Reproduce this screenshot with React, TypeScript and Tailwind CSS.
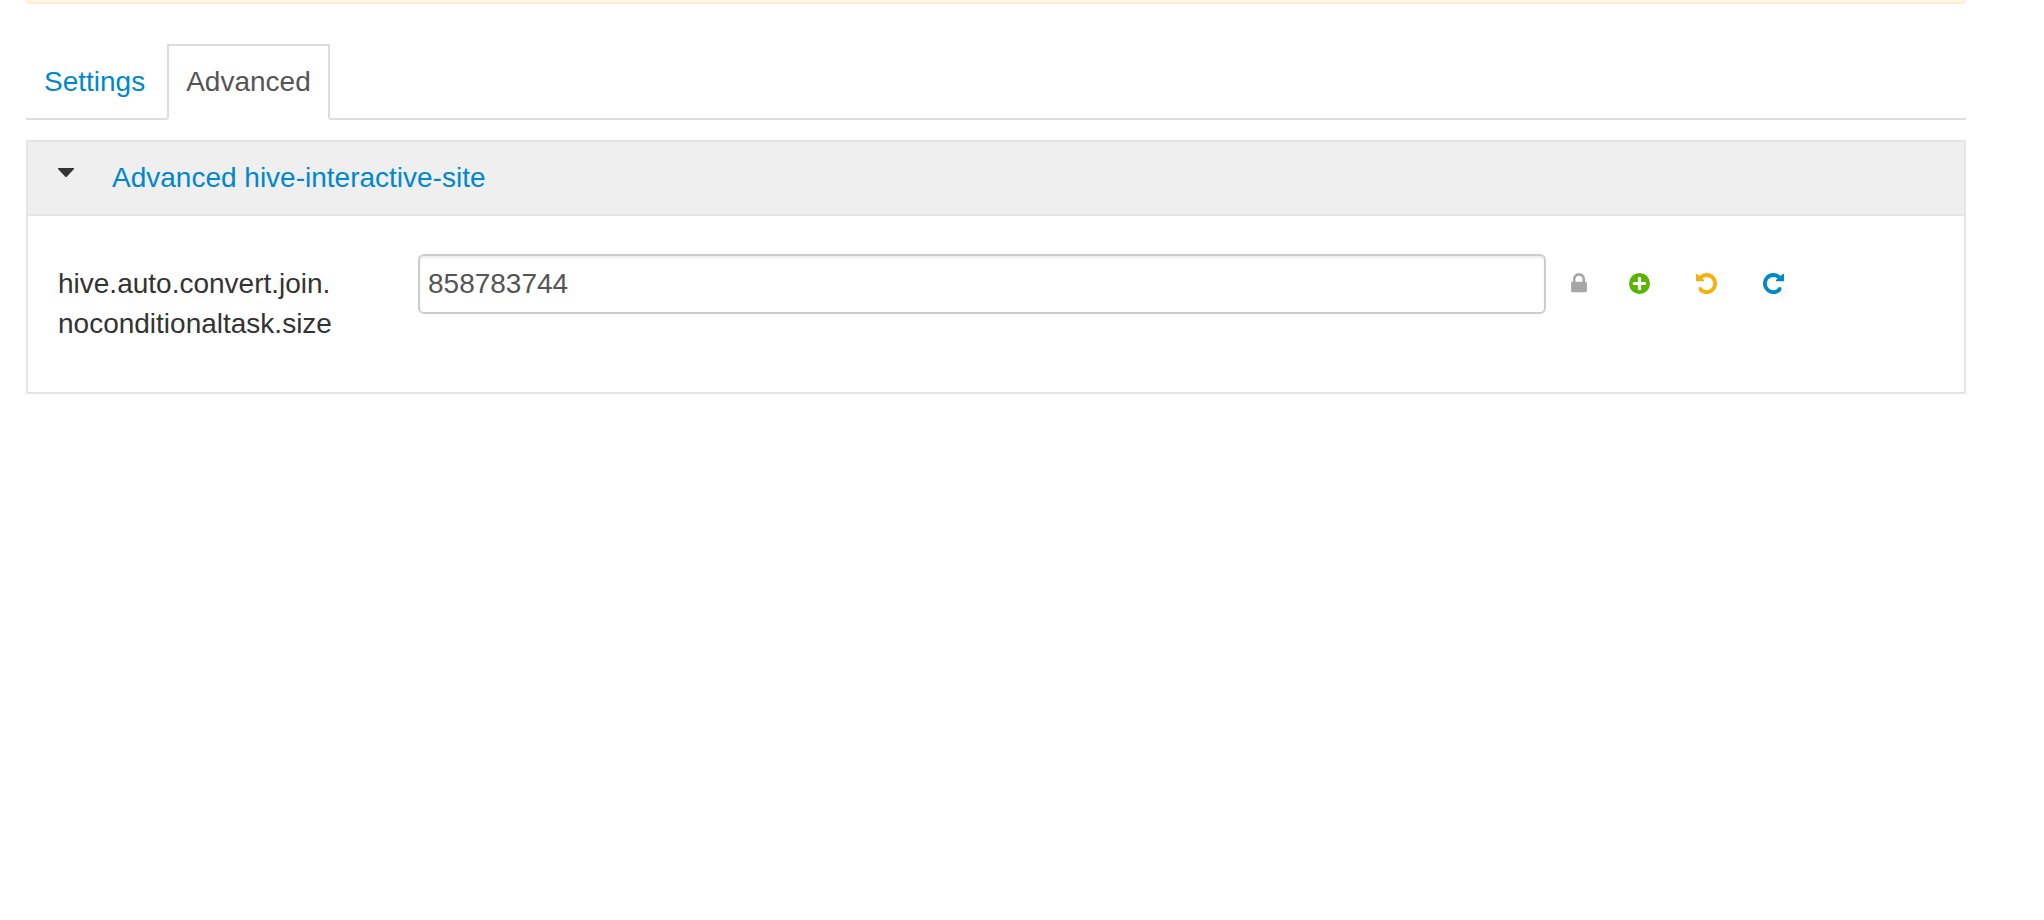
import { useState } from "react";
import type { ReactNode } from "react";

const LOCK_PATH =
  "M320 768h512v192q0 106 -75 181t-181 75t-181 -75t-75 -181v-192zM1152 672v-576q0 -40 -28 -68t-68 -28h-960q-40 0 -68 28t-28 68v576q0 40 28 68t68 28h32v192q0 184 132 316t316 132t316 -132t132 -316v-192h32q40 0 68 -28t28 -68z";

function LockIcon() {
  return (
    <svg viewBox="0 0 1152 1536" className="h-[21px] w-4" fill="#a6a6a6" aria-hidden="true">
      <path transform="matrix(1 0 0 -1 0 1408)" d={LOCK_PATH} />
    </svg>
  );
}

function PlusIcon() {
  return (
    <svg viewBox="0 0 21 21" className="size-[21px]" aria-hidden="true">
      <circle cx="10.5" cy="10.5" r="10.5" fill="currentColor" />
      <path d="M10.5 5.300v10.400M5.300 10.500h10.400" stroke="#fff" strokeWidth="3.2" strokeLinecap="round" />
    </svg>
  );
}

function UndoIcon({ mirrored = false }: { mirrored?: boolean }) {
  return (
    <svg viewBox="0 0 21 21" className="size-[21px]" aria-hidden="true">
      <g transform={mirrored ? "matrix(-1 0 0 1 21 0)" : undefined}>
        <path d="M4.500 4.500A8.600 8.600 0 1 1 4.100 16.300" fill="none" stroke="currentColor" strokeWidth="3.8" />
        <circle cx="4.4" cy="16" r="1.9" fill="currentColor" />
        <path d="M0 1.200Q0 .800 .5 .800H1L8 7.100V7.800Q8 8.300 7.500 8.300H.5Q0 8.300 0 7.800Z" fill="currentColor" />
      </g>
    </svg>
  );
}

interface IconButtonProps {
  label: string;
  className: string;
  children: ReactNode;
}

function IconButton({ label, className, children }: IconButtonProps) {
  return (
    <button type="button" aria-label={label} className={className}>
      {children}
    </button>
  );
}

export default function App() {
  const [open, setOpen] = useState(true);
  const [value, setValue] = useState("858783744");

  return (
    <div className="min-h-screen bg-white pr-[78px] pl-[26px] font-['Liberation_Sans',Arial,sans-serif] text-[28px] leading-[40px] text-[#333]">
      <div className="h-1 rounded-b-lg border-2 border-t-0 border-[#fbeed5] bg-[#fcf8e3]" />

      <nav className="mt-10 flex border-b-2 border-[#ddd]">
        <a href="#settings" className="mr-1 px-[18px] pt-[18px] pb-4 text-[#0088cc]">
          Settings
        </a>
        <a
          href="#advanced"
          className="-mb-[2px] border-2 border-[#ddd] border-b-white bg-white px-[17px] pt-4 pb-4 text-[#555]"
        >
          Advanced
        </a>
      </nav>

      <section className="mt-5 border-2 border-[#e5e5e5]">
        <div className="flex border-b-2 border-[#e5e5e5] bg-[#efefef] px-[30px] py-4">
          <button
            type="button"
            aria-label="Toggle section"
            aria-expanded={open}
            className="mt-[10px] self-start"
            onClick={() => setOpen(!open)}
          >
            <svg viewBox="0 0 16 9" className="h-[9px] w-4" fill="#333" aria-hidden="true">
              <path d="M0 0h16v1L8.500 9h-1L0 1z" />
            </svg>
          </button>
          <a href="#hive-interactive-site" className="ml-[38px] text-[#0088cc]">
            Advanced hive-interactive-site
          </a>
        </div>

        {open && (
          <div className="flex px-[30px] pt-[38px] pb-12">
            <label htmlFor="task-size" className="w-[360px] shrink-0 pt-[10px]">
              hive.auto.convert.join.
              <br />
              noconditionaltask.size
            </label>
            <input
              id="task-size"
              type="text"
              value={value}
              onChange={(e) => setValue(e.target.value)}
              className="h-[60px] min-w-0 flex-1 rounded-md border-2 border-[#ccc] bg-white px-2 text-[#555] shadow-[inset_0_2px_2px_rgba(0,0,0,0.075)]"
            />
            <div className="mr-[150px] ml-[25px] flex h-[58px] items-center">
              <LockIcon />
              <IconButton label="Add override" className="ml-[42px] text-[#5ab400]">
                <PlusIcon />
              </IconButton>
              <IconButton label="Undo" className="ml-[46px] text-[#f5b00d]">
                <UndoIcon />
              </IconButton>
              <IconButton label="Set recommended" className="ml-[46px] text-[#0088cc]">
                <UndoIcon mirrored />
              </IconButton>
            </div>
          </div>
        )}
      </section>
    </div>
  );
}
